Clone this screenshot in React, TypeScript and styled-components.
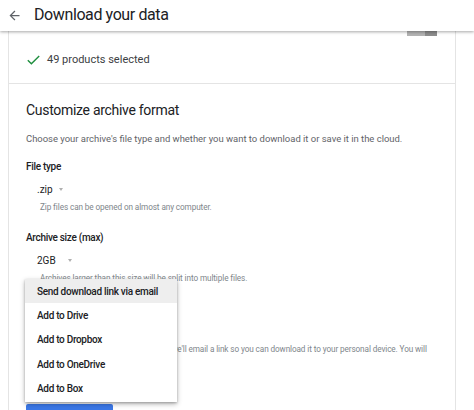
import React from "react";
import styled, { createGlobalStyle } from "styled-components";

const Global = createGlobalStyle`
  html, body {
    margin: 0;
    padding: 0;
    background: #ffffff;
    font-family: Roboto, "Liberation Sans", Arial, sans-serif;
    overflow: hidden;
  }
`;

const Header = styled.header`
  position: relative;
  z-index: 2;
  height: 31px;
  display: flex;
  align-items: center;
  gap: 12px;
  padding-left: 7px;
  background: #ffffff;
  box-shadow: 0 1px 3px rgba(0, 0, 0, 0.35);
`;

const BackButton = styled.button`
  width: 15px;
  height: 15px;
  padding: 0;
  border: 0;
  background: none;
  display: flex;
  align-items: center;
  justify-content: center;
  color: #5f6368;
`;

const Title = styled.h1`
  margin: 0 0 2px;
  font-size: 16px;
  font-weight: 400;
  color: #202124;
  letter-spacing: -0.4px;
`;

const Page = styled.main`
  padding: 0 18px 0 8px;
`;

const Card = styled.div`
  border: 1px solid #e4e4e4;
  border-top: 0;
`;

const ThumbRow = styled.div`
  height: 5px;
  display: flex;
  justify-content: flex-end;
  padding-right: 18px;
`;

const Thumb = styled.div`
  width: 30px;
  height: 5px;
  background: linear-gradient(to right, #b3b3b3 0 60%, #8d8d8d 60% 100%);
`;

const Selected = styled.div`
  height: 47px;
  display: flex;
  align-items: center;
  gap: 7px;
  padding-left: 18px;
  font-size: 11px;
  color: #3c4043;
  border-bottom: 1px solid #e4e4e4;
`;

const Section = styled.section`
  position: relative;
  padding: 16px 17px 0 17px;
`;

const Heading = styled.h2`
  margin: 0;
  font-size: 14px;
  font-weight: 400;
  letter-spacing: -0.3px;
  color: #202124;
  line-height: 20px;
`;

const Lead = styled.p`
  margin: 12px 0 0;
  font-size: 9.45px;
  line-height: 14px;
  color: #5f6368;
`;

const Field = styled.div<{ $top: number }>`
  margin-top: ${({ $top }) => $top}px;
`;

const Label = styled.div`
  font-size: 10px;
  font-weight: 500;
  letter-spacing: -0.3px;
  color: #202124;
  line-height: 14px;
`;

const SelectRow = styled.div`
  margin-top: 7px;
  padding-left: 11px;
  height: 16px;
  display: flex;
  align-items: center;
`;

const SelectValue = styled.span<{ $gap: number }>`
  display: flex;
  align-items: center;
  gap: ${({ $gap }) => $gap}px;
  font-size: 10px;
  color: #202124;
`;

const Caret = styled.span`
  width: 0;
  height: 0;
  border-left: 2.5px solid transparent;
  border-right: 2.5px solid transparent;
  border-top: 3px solid #b0b0b0;
`;

const Help = styled.p<{ $lh?: number; $top?: number }>`
  margin: ${({ $top }) => $top ?? 4}px 0 0 14px;
  font-size: 8.2px;
  line-height: ${({ $lh }) => $lh ?? 12}px;
  letter-spacing: -0.1px;
  color: #80868b;
`;

const Menu = styled.ul`
  position: absolute;
  z-index: 3;
  left: 16px;
  top: 195px;
  width: 152px;
  margin: 0;
  padding: 0 0 2px;
  list-style: none;
  background: #ffffff;
  box-shadow: 0 2px 5px rgba(0, 0, 0, 0.3), 0 1px 2px rgba(0, 0, 0, 0.2);
`;

const MenuItem = styled.li<{ $active?: boolean }>`
  height: 24.3px;
  display: flex;
  align-items: center;
  padding-left: 12px;
  white-space: nowrap;
  font-size: 10px;
  font-weight: 500;
  letter-spacing: -0.3px;
  color: #202124;
  background: ${({ $active }) => ($active ? "#eeeeee" : "transparent")};
`;

const PrimaryButton = styled.button`
  display: block;
  margin-top: 31px;
  width: 87px;
  height: 28px;
  border: 0;
  border-radius: 2px;
  background: #3b78e7;
  color: #ffffff;
  font-family: inherit;
  font-size: 10px;
  font-weight: 500;
`;

const destinations = [
  "Send download link via email",
  "Add to Drive",
  "Add to Dropbox",
  "Add to OneDrive",
  "Add to Box",
];

export default function App() {
  return (
    <>
      <Global />
      <Header>
        <BackButton aria-label="Back">
          <svg width="15" height="15" viewBox="0 0 24 24">
            <path
              d="M20 11H7.83l5.59-5.59L12 4l-8 8 8 8 1.41-1.41L7.83 13H20v-2z"
              fill="currentColor"
            />
          </svg>
        </BackButton>
        <Title>Download your data</Title>
      </Header>
      <Page>
        <Card>
          <ThumbRow>
            <Thumb />
          </ThumbRow>
          <Selected>
            <svg width="13" height="10" viewBox="0 0 13 10">
              <path d="M0.8 5.2l3.6 3.6L12.2 1" fill="none" stroke="#1e8e3e" strokeWidth="1.4" />
            </svg>
            49 products selected
          </Selected>
          <Section>
            <Heading>Customize archive format</Heading>
            <Lead>
              Choose your archive's file type and whether you want to download it or save it in the cloud.
            </Lead>
            <Field $top={14}>
              <Label>File type</Label>
              <SelectRow>
                <SelectValue $gap={6}>
                  .zip <Caret />
                </SelectValue>
              </SelectRow>
              <Help>Zip files can be opened on almost any computer.</Help>
            </Field>
            <Field $top={18}>
              <Label>Archive size (max)</Label>
              <SelectRow>
                <SelectValue $gap={12}>
                  2GB <Caret />
                </SelectValue>
              </SelectRow>
              <Help>Archives larger than this size will be split into multiple files.</Help>
            </Field>
            <Field $top={18}>
              <Label>Delivery method</Label>
              <SelectRow>
                <SelectValue $gap={6}>
                  Send download link via email <Caret />
                </SelectValue>
              </SelectRow>
              <Help $lh={16} $top={2}>
                When your archive has been created, we'll email a link so you can download it to your personal device. You will
                <br />
                have one week to download them.
              </Help>
            </Field>
            <PrimaryButton>Create export</PrimaryButton>
            <Menu>
              {destinations.map((d, i) => (
                <MenuItem key={d} $active={i === 0}>
                  {d}
                </MenuItem>
              ))}
            </Menu>
          </Section>
        </Card>
      </Page>
    </>
  );
}
